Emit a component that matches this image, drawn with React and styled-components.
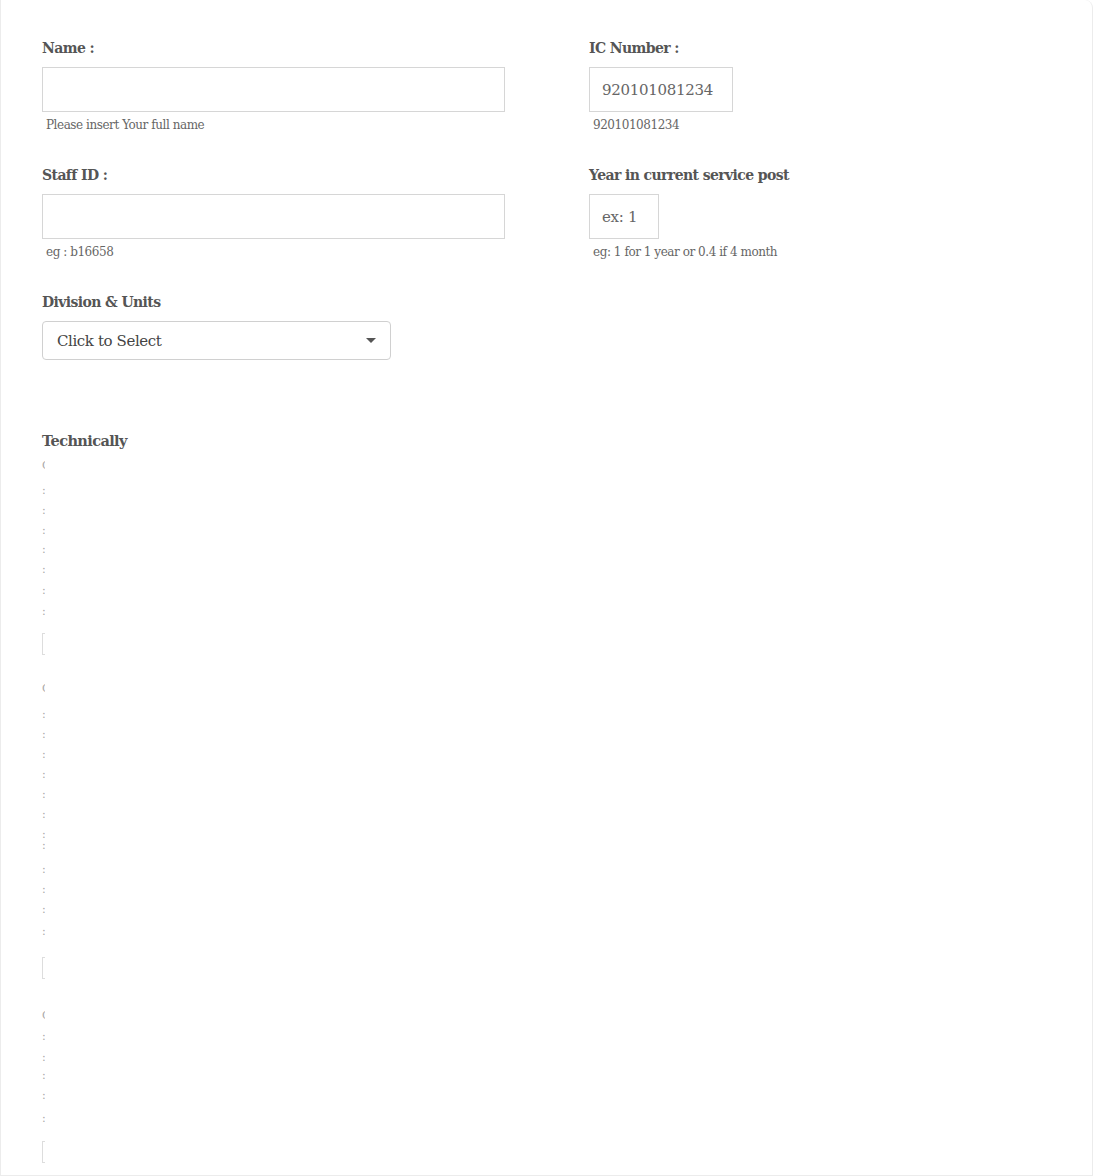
import React from 'react';
import styled, { createGlobalStyle } from 'styled-components';

const Global = createGlobalStyle`
  html, body { margin: 0; padding: 0; background: #fff; }
  body { font-family: "DejaVu Serif", "Liberation Serif", serif; color: #555; }
`;

const Card = styled.div`
  box-sizing: border-box;
  width: 1093px;
  min-height: 1176px;
  border: 1px solid #ececec;
  border-top: none;
  border-radius: 0 8px 0 0;
  padding: 38px 42px 0 41px;
`;

const Grid = styled.div`
  display: grid;
  grid-template-columns: 547px 1fr;
  row-gap: 33px;
`;

const Field = styled.div`
  display: flex;
  flex-direction: column;
  align-items: flex-start;
`;

const Label = styled.label`
  font-size: 14px;
  font-weight: bold;
  letter-spacing: -0.6px;
  color: #555;
  line-height: 20px;
  margin-bottom: 9px;
`;

const Input = styled.div`
  box-sizing: border-box;
  width: ${p => p.$w}px;
  height: 45px;
  border: 1px solid #d6d6d6;
  font-size: 15px;
  color: #666;
  display: flex;
  align-items: center;
  padding-left: 12px;
  letter-spacing: -0.3px;
`;

const Help = styled.div`
  font-size: 12px;
  color: #666;
  margin-top: 6px;
  padding-left: 4px;
  letter-spacing: -0.45px;
`;

const Select = styled.div`
  box-sizing: border-box;
  width: 349px;
  height: 39px;
  border: 1px solid #d0d0d0;
  border-radius: 4px;
  display: flex;
  align-items: center;
  justify-content: space-between;
  padding: 0 14px 0 14px;
  font-size: 15px;
  color: #444;
  letter-spacing: -0.4px;
`;

const Caret = styled.span`
  width: 0;
  height: 0;
  border-left: 5px solid transparent;
  border-right: 5px solid transparent;
  border-top: 5px solid #555;
`;

const Section = styled.h3`
  margin: 71px 0 0 0;
  font-size: 14.5px;
  font-weight: bold;
  letter-spacing: -0.6px;
  line-height: 20px;
  color: #555;
`;

const Clip = styled.div`
  width: 3px;
  overflow: hidden;
  white-space: nowrap;
  font-size: 11px;
  color: #aaa;
  opacity: 0.99;
`;

const Question = styled.div`
  padding-top: ${p => p.$top}px;
`;

const Line = styled.div`
  height: 20px;
  line-height: 20px;
  margin-top: ${p => p.$mt}px;
`;

const Box = styled.div`
  margin-top: ${p => p.$mt}px;
  width: 20px;
  height: 22px;
  border: 1px solid #ddd;
  box-sizing: border-box;
`;

const questions = [
  { top: 5, gaps: [0, 5, 0, 0, -1, 0, 1, 1], box: 11 },
  { top: 24, gaps: [0, 6, 0, 0, 0, 0, 0, 0, -9, 4, 0, 0, 2], box: 15 },
  { top: 27, gaps: [0, 1, 1, -2, 0, 3], box: 12 },
];

export default function App() {
  return (
    <>
      <Global />
      <Card>
        <Grid>
          <Field>
            <Label>Name :</Label>
            <Input $w={463} />
            <Help>Please insert Your full name</Help>
          </Field>
          <Field>
            <Label>IC Number :</Label>
            <Input $w={144}>920101081234</Input>
            <Help>920101081234</Help>
          </Field>
          <Field>
            <Label>Staff ID :</Label>
            <Input $w={463} />
            <Help>eg : b16658</Help>
          </Field>
          <Field>
            <Label>Year in current service post</Label>
            <Input $w={70}>ex: 1</Input>
            <Help>eg: 1 for 1 year or 0.4 if 4 month</Help>
          </Field>
          <Field>
            <Label>Division &amp; Units</Label>
            <Select>
              Click to Select
              <Caret />
            </Select>
          </Field>
        </Grid>
        <Section>Technically</Section>
        <Clip>
          {questions.map((q, i) => (
            <Question key={i} $top={q.top}>
              {q.gaps.map((g, j) => (
                <Line key={j} $mt={g}>{j === 0 ? `Question ${i + 1}` : `: option ${j}`}</Line>
              ))}
              <Box $mt={q.box} />
            </Question>
          ))}
        </Clip>
      </Card>
    </>
  );
}
